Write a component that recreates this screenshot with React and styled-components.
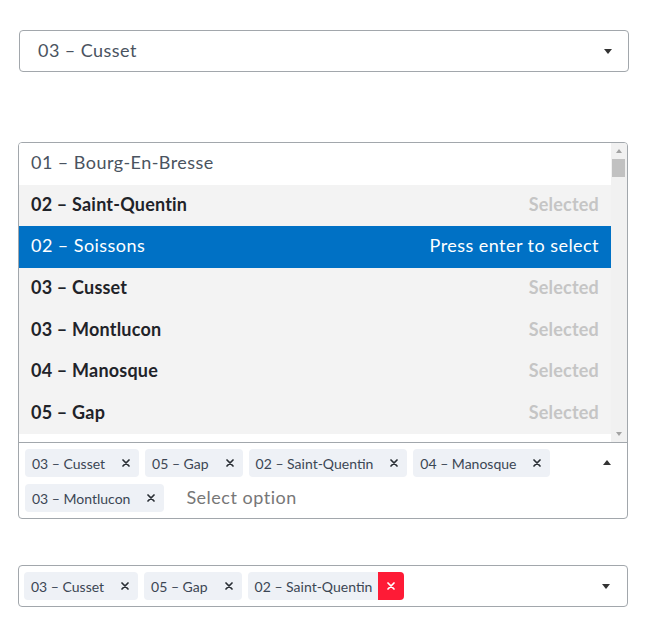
import React from 'react';
import styled, { createGlobalStyle } from 'styled-components';

const GlobalStyle = createGlobalStyle`
    *, *::before, *::after {
        box-sizing: border-box;
    }
    html, body {
        margin: 0;
        padding: 0;
        background: #fff;
    }
    body {
        font-family: Lato, "Open Sans", sans-serif;
        color: #3b4654;
    }
`;

const cities = [
    '01 – Bourg-En-Bresse', '02 – Saint-Quentin', '02 – Soissons', '03 – Cusset', '03 – Montlucon',
    '04 – Manosque', '05 – Gap', '06 – Antibes', '06 – Cannes', '06 – Grasse', '06 – Nice',
    '07 – Annonay', '08 – Charleville-Mézières', '09 – Pamiers', '10 – Troyes', '11 – Carcassonne',
];

const selected = ['03 – Cusset', '05 – Gap', '02 – Saint-Quentin', '04 – Manosque', '03 – Montlucon'];
const highlighted = '02 – Soissons';

const Page = styled.div`
    display: flex;
    flex-direction: column;
    padding: 30px 0 0 18px;
`;

const Select = styled.div`
    display: flex;
    align-items: center;
    height: 42px;
    border: 1px solid #a2a7ac;
    border-radius: 4px;
    padding: ${props => props.$tags ? '0 17px 0 5px' : '0 16px 0 18px'};
    margin-left: ${props => props.$shift ? '1px' : '0'};
    margin-top: ${props => props.$gap || 0}px;
    width: 610px;
`;

const Value = styled.span`
    flex: 1;
    font-size: 18px;
    letter-spacing: 0.45px;
    padding-bottom: 2px;
    color: #4a5360;
`;

const Caret = styled.span`
    width: 0;
    height: 0;
    border-left: 4.5px solid transparent;
    border-right: 4.5px solid transparent;
    ${props => props.$up
        ? 'border-bottom: 5px solid #333;'
        : 'border-top: 5px solid #333;'}
    align-self: ${props => props.$top ? 'flex-start' : 'center'};
    margin-top: ${props => props.$top ? '11px' : '0'};
`;

const Multi = styled.div`
    margin-top: 70px;
    border: 1px solid #a2a7ac;
    border-radius: 4px;
    width: 610px;
    overflow: hidden;
`;

const ListFrame = styled.div`
    display: flex;
    height: 300px;
    border-bottom: 1px solid #a2a7ac;
`;

const List = styled.ul`
    flex: 1;
    list-style: none;
    margin: 0;
    padding: 0;
    overflow: hidden;
`;

const ScrollBar = styled.div`
    width: 16px;
    display: flex;
    flex-direction: column;
    background: #f1f1f1;
`;

const ScrollButton = styled.div`
    height: 16px;
    display: flex;
    align-items: center;
    justify-content: center;
    &::after {
        content: '';
        width: 0;
        height: 0;
        border-left: 3.5px solid transparent;
        border-right: 3.5px solid transparent;
        ${props => props.$down
            ? 'border-top: 4px solid #a3a3a3;'
            : 'border-bottom: 4px solid #a3a3a3;'}
    }
`;

const Track = styled.div`
    flex: 1;
    padding: 0 2px 0 1px;
`;

const Thumb = styled.div`
    height: 18px;
    background: #c1c1c1;
`;

const Option = styled.li`
    display: flex;
    justify-content: space-between;
    align-items: center;
    height: 41.6px;
    padding: 0 12px 3px;
    font-size: 18px;
    letter-spacing: ${props => props.$selected ? '0.2px' : '0.45px'};
    font-weight: ${props => props.$selected ? 700 : 400};
    color: ${props => props.$active ? '#fff' : props.$selected ? '#1f2329' : '#4a5360'};
    background: ${props => props.$active ? '#0071c5' : props.$selected ? '#f3f3f3' : '#fff'};
    white-space: nowrap;
`;

const Hint = styled.span`
    font-weight: ${props => props.$bold ? 700 : 400};
    color: ${props => props.$bold ? '#c5c5c5' : '#fff'};
`;

const TagsArea = styled.div`
    display: flex;
    padding: 6px 16px 6px 6px;
`;

const TagWrap = styled.div`
    flex: 1;
    display: flex;
    flex-wrap: wrap;
    align-items: center;
    gap: 7px 6px;
`;

const Tag = styled.span`
    display: inline-flex;
    align-items: center;
    height: 28px;
    padding-left: 7px;
    border-radius: 4px;
    background: #eef1f6;
    font-size: 14px;
    color: #3b4654;
    white-space: nowrap;
    overflow: hidden;
`;

const Remove = styled.span`
    display: flex;
    align-items: center;
    justify-content: center;
    align-self: stretch;
    width: 26px;
    margin-left: ${props => props.$danger ? '6px' : '8px'};
    background: ${props => props.$danger ? '#fe1b36' : 'transparent'};
    color: ${props => props.$danger ? '#fff' : '#2a2f35'};
`;

const Placeholder = styled.span`
    margin-left: 16px;
    padding-bottom: 2px;
    font-size: 18px;
    letter-spacing: 0.5px;
    color: #777;
`;

const TagRow = styled.div`
    flex: 1;
    display: flex;
    align-items: center;
    gap: 6px;
`;

const Cross = () => (
    <svg width="8" height="8" viewBox="0 0 8 8">
        <path d="M1 1 L7 7 M7 1 L1 7" stroke="currentColor" strokeWidth="1.7" strokeLinecap="round" />
    </svg>
);

const App = () => {
    const shown = selected.slice(0, 3);

    return (
        <>
            <GlobalStyle />
            <Page>
                <Select $shift>
                    <Value>03 – Cusset</Value>
                    <Caret />
                </Select>

                <Multi>
                    <ListFrame>
                        <List>
                            {cities.map(city => {
                                const isSelected = selected.includes(city);
                                const isActive = city === highlighted;
                                return (
                                    <Option key={city} $selected={isSelected} $active={isActive}>
                                        <span>{city}</span>
                                        {isActive && <Hint>Press enter to select</Hint>}
                                        {isSelected && <Hint $bold>Selected</Hint>}
                                    </Option>
                                );
                            })}
                        </List>
                        <ScrollBar>
                            <ScrollButton />
                            <Track><Thumb /></Track>
                            <ScrollButton $down />
                        </ScrollBar>
                    </ListFrame>
                    <TagsArea>
                        <TagWrap>
                            {selected.map(item => (
                                <Tag key={item}>
                                    {item}
                                    <Remove><Cross /></Remove>
                                </Tag>
                            ))}
                            <Placeholder>Select option</Placeholder>
                        </TagWrap>
                        <Caret $up $top />
                    </TagsArea>
                </Multi>

                <Select $tags $gap={46}>
                    <TagRow>
                        {shown.map((item, i) => (
                            <Tag key={item}>
                                {item}
                                <Remove $danger={i === shown.length - 1}><Cross /></Remove>
                            </Tag>
                        ))}
                    </TagRow>
                    <Caret />
                </Select>
            </Page>
        </>
    );
};

export default App;
